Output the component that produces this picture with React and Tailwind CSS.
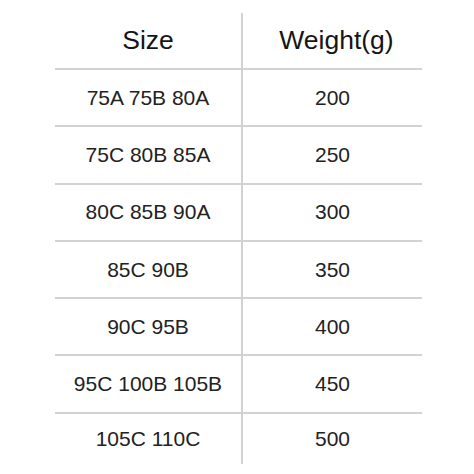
import React from "react";

const rows = [
  ["75A 75B 80A", "200"],
  ["75C 80B 85A", "250"],
  ["80C 85B 90A", "300"],
  ["85C 90B", "350"],
  ["90C 95B", "400"],
  ["95C 100B 105B", "450"],
  ["105C 110C", "500"],
];

function App() {
  return (
    <div
      className="w-[474px] h-[474px] bg-white pt-[13px] pl-[55px]"
      style={{ fontFamily: '"Liberation Sans", Arial, sans-serif' }}
    >
      <div className="w-[367px]">
        <div className="flex h-[55px] text-[26.5px] text-[#151515]">
          <div className="w-[188px] border-r-2 border-[#d2d2d2] flex items-center justify-center">
            Size
          </div>
          <div className="flex-1 flex items-center justify-center pl-[8px]">
            Weight(g)
          </div>
        </div>
        {rows.map((r, i) => (
          <div
            key={i}
            className={`flex border-t-2 border-[#d2d2d2] text-[21px] text-[#222] ${
              i === rows.length - 1 ? "h-[52px]" : "h-[57.3px]"
            }`}
          >
            <div className="w-[188px] border-r-2 border-[#d2d2d2] flex items-center justify-center">
              {r[0]}
            </div>
            <div className="flex-1 flex items-center justify-center">
              {r[1]}
            </div>
          </div>
        ))}
      </div>
    </div>
  );
}

export default App;
